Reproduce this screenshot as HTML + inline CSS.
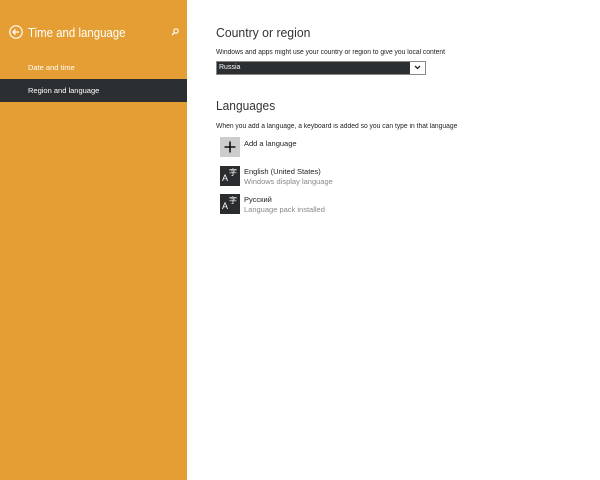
<!DOCTYPE html>
<html><head><meta charset="utf-8"><style>
body{margin:0;width:600px;height:480px;position:relative;font-family:"Liberation Sans","Noto Sans CJK SC",sans-serif;background:#fff;overflow:hidden}
.side{position:absolute;left:0;top:0;width:187px;height:480px;background:#e49e33}
.t{position:absolute;white-space:nowrap}
.ico{position:absolute;left:220px;width:20px;height:20px;background:#2a2d30;color:#fff}
</style></head><body>
<div class="side">
<svg style="position:absolute;left:9px;top:25px" width="14" height="14" viewBox="0 0 14 14"><circle cx="7" cy="7" r="6.2" fill="none" stroke="#fff" stroke-width="1.2"/><path d="M10 7H4M6.5 4.5L4 7l2.5 2.5" fill="none" stroke="#fff" stroke-width="1.3"/></svg>
<div class="t" style="left:28px;top:25px;font-size:13px;color:#fff;transform:scaleX(0.88);transform-origin:left">Time and language</div>
<svg style="position:absolute;left:171px;top:28px" width="8" height="8" viewBox="0 0 8 8"><circle cx="5" cy="3" r="2.2" fill="none" stroke="#fff" stroke-width="1.1"/><path d="M3.4 4.6L1 7" stroke="#fff" stroke-width="1.3"/></svg>
<div class="t" style="left:28px;top:63px;font-size:7.5px;color:#fff">Date and time</div>
<div style="position:absolute;left:0;top:79px;width:187px;height:23px;background:#2b2f32"></div>
<div class="t" style="left:28px;top:86px;font-size:7.5px;color:#fff">Region and language</div>
</div>
<div class="t" style="left:216px;top:25px;font-size:13px;color:#333;transform:scaleX(0.94);transform-origin:left">Country or region</div>
<div class="t" style="left:216px;top:49px;font-size:7px;color:#222;transform:scaleX(0.96);transform-origin:left">Windows and apps might use your country or region to give you local content</div>
<div style="position:absolute;left:216px;top:61px;width:210px;height:14px;background:#2b2f32;border:1px solid #888;box-sizing:border-box"></div>
<div class="t" style="left:219px;top:64px;font-size:7px;color:#fff">Russia</div>
<div style="position:absolute;left:410px;top:62px;width:15px;height:12px;background:#fff"></div>
<svg style="position:absolute;left:414px;top:65px" width="7" height="5"><path d="M1 1l2.5 2.5L6 1" fill="none" stroke="#222" stroke-width="1.3"/></svg>
<div class="t" style="left:216px;top:98px;font-size:13px;color:#333;transform:scaleX(0.92);transform-origin:left">Languages</div>
<div class="t" style="left:216px;top:123px;font-size:7px;color:#222;transform:scaleX(0.96);transform-origin:left">When you add a language, a keyboard is added so you can type in that language</div>
<div style="position:absolute;left:220px;top:137px;width:20px;height:20px;background:#ccc"></div>
<svg style="position:absolute;left:224px;top:141px" width="12" height="12"><path d="M6 0.5v11M0.5 6h11" stroke="#111" stroke-width="1.6"/></svg>
<div class="t" style="left:244px;top:139px;font-size:7.5px;color:#222">Add a language</div>
<div class="ico" style="top:166px"><span class="t" style="left:2px;top:7px;font-size:9px">A</span><span class="t" style="left:9px;top:1px;font-size:8px">字</span></div>
<div class="t" style="left:244px;top:167px;font-size:7.5px;color:#222">English (United States)</div>
<div class="t" style="left:244px;top:177px;font-size:7.5px;color:#888">Windows display language</div>
<div class="ico" style="top:194px"><span class="t" style="left:2px;top:7px;font-size:9px">A</span><span class="t" style="left:9px;top:1px;font-size:8px">字</span></div>
<div class="t" style="left:244px;top:195px;font-size:7.5px;color:#222">Русский</div>
<div class="t" style="left:244px;top:205px;font-size:7.5px;color:#888">Language pack installed</div>
</body></html>
